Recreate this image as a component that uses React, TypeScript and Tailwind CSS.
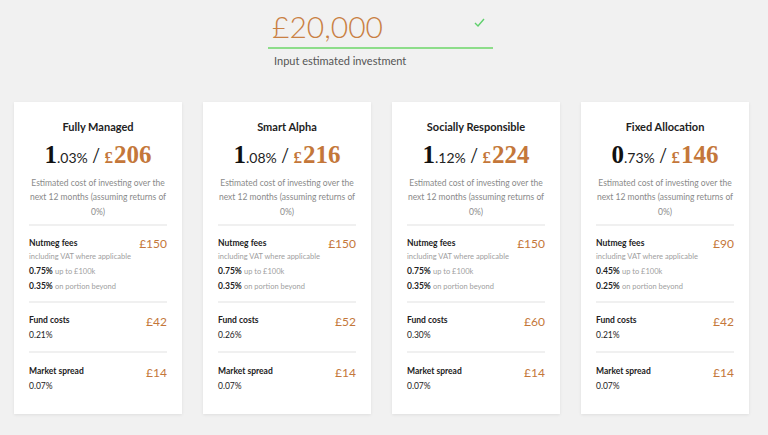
import React from "react";

type Plan = {
  title: string;
  whole: string;
  frac: string;
  total: string;
  fees: string;
  feeA: string;
  feeB: string;
  fund: string;
  fundPct: string;
  spread: string;
  spreadPct: string;
};

const plans: Plan[] = [
  { title: "Fully Managed", whole: "1", frac: ".03%", total: "206", fees: "150", feeA: "0.75%", feeB: "0.35%", fund: "42", fundPct: "0.21%", spread: "14", spreadPct: "0.07%" },
  { title: "Smart Alpha", whole: "1", frac: ".08%", total: "216", fees: "150", feeA: "0.75%", feeB: "0.35%", fund: "52", fundPct: "0.26%", spread: "14", spreadPct: "0.07%" },
  { title: "Socially Responsible", whole: "1", frac: ".12%", total: "224", fees: "150", feeA: "0.75%", feeB: "0.35%", fund: "60", fundPct: "0.30%", spread: "14", spreadPct: "0.07%" },
  { title: "Fixed Allocation", whole: "0", frac: ".73%", total: "146", fees: "90", feeA: "0.45%", feeB: "0.25%", fund: "42", fundPct: "0.21%", spread: "14", spreadPct: "0.07%" },
];

const sans = "font-['Lato','Open_Sans',sans-serif]";
const serif = "font-['Liberation_Serif','DejaVu_Serif',serif]";

function Card({ p }: { p: Plan }) {
  return (
    <div className="bg-white shadow-[0_1px_3px_rgba(0,0,0,0.08)] h-[312px] px-[15px] pt-[18px] flex flex-col">
      <div className={`${sans} text-center text-[11px] leading-[14px] font-bold text-[#222]`}>{p.title}</div>
      <div className="mt-[7px] h-[28px] flex items-baseline justify-center whitespace-nowrap">
        <span className={`${serif} text-[25px] font-bold text-[#111] leading-[28px]`}>{p.whole}</span>
        <span className={`${sans} text-[14px] text-[#222] leading-[28px]`}>{p.frac}</span>
        <span className={`${serif} text-[24px] text-[#222] leading-[28px] ml-[5px] mr-[5px]`}>/</span>
        <span className={`${serif} text-[17px] font-bold text-[#c4773a] leading-[28px] mr-[1px]`}>£</span>
        <span className={`${serif} text-[25px] font-bold text-[#c4773a] leading-[28px]`}>{p.total}</span>
      </div>
      <div className={`${sans} mt-[7px] text-center text-[8.5px] leading-[14.5px] text-[#8a8a8a]`}>
        Estimated cost of investing over the next 12 months (assuming returns of 0%)
      </div>
      <div className="mt-[5px] h-[2px] bg-[#f0f0f0]" />
      <div className="pt-[10px] pb-[7px] flex justify-between">
        <div className={`${sans} text-[8.5px] leading-[14px] text-[#222]`}>
          <div className="font-bold">Nutmeg fees</div>
          <div className="text-[7.5px] text-[#a0a0a0]">including VAT where applicable</div>
          <div>
            <span className="font-bold">{p.feeA}</span>{" "}
            <span className="text-[7.5px] text-[#a0a0a0]">up to £100k</span>
          </div>
          <div>
            <span className="font-bold">{p.feeB}</span>{" "}
            <span className="text-[7.5px] text-[#a0a0a0]">on portion beyond</span>
          </div>
        </div>
        <div className={`${sans} text-[12px] leading-[16px] text-[#c4773a]`}>£{p.fees}</div>
      </div>
      <div className="h-[2px] bg-[#f0f0f0]" />
      <div className="pt-[10px] pb-[8px] flex justify-between">
        <div className={`${sans} text-[8.5px] leading-[15px] text-[#222]`}>
          <div className="font-bold">Fund costs</div>
          <div>{p.fundPct}</div>
        </div>
        <div className={`${sans} text-[12px] leading-[16px] text-[#c4773a] mt-[1px]`}>£{p.fund}</div>
      </div>
      <div className="h-[2px] bg-[#f0f0f0]" />
      <div className="pt-[11px] flex justify-between">
        <div className={`${sans} text-[8.5px] leading-[15px] text-[#222]`}>
          <div className="font-bold">Market spread</div>
          <div>{p.spreadPct}</div>
        </div>
        <div className={`${sans} text-[12px] leading-[16px] text-[#c4773a] mt-[1px]`}>£{p.spread}</div>
      </div>
    </div>
  );
}

export default function App() {
  return (
    <div className="w-[768px] h-[435px] bg-[#f1f1f1] overflow-hidden">
      <div className="ml-[268px] w-[225px] pt-[4px]">
        <div className="flex items-center justify-between h-[43px]">
          <span className={`${sans} font-light text-[30px] leading-[36px] text-[#c98043] ml-[4px]`}>£20,000</span>
          <svg width="11" height="9" viewBox="0 0 11 9" className="mr-[8px] mt-[-6px]">
            <path d="M1 5 L4 8 L10 1" fill="none" stroke="#5fd06c" strokeWidth="1.4" />
          </svg>
        </div>
        <div className="h-[1.5px] bg-[#8ddd8a]" />
        <div className={`${sans} text-[11px] leading-[14px] text-[#555] mt-[5px] ml-[6px]`}>Input estimated investment</div>
      </div>
      <div className="ml-[14px] mt-[34px] w-[735px] grid grid-cols-4 gap-[21px]">
        {plans.map((p) => (
          <Card key={p.title} p={p} />
        ))}
      </div>
    </div>
  );
}
